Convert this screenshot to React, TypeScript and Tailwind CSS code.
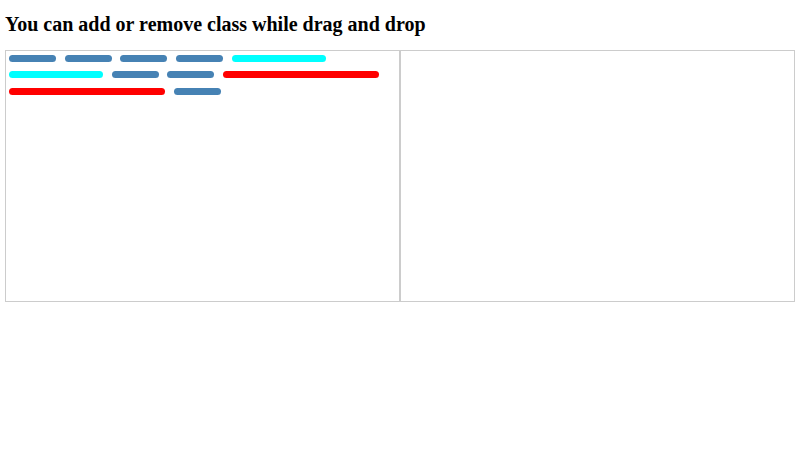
import React from "react";

type Item = { w: string; c: string };

const items: Item[] = [
  { w: "w-[47px]", c: "bg-[#4682b4]" },
  { w: "w-[47px]", c: "bg-[#4682b4]" },
  { w: "w-[47px]", c: "bg-[#4682b4]" },
  { w: "w-[47px]", c: "bg-[#4682b4]" },
  { w: "w-[94px]", c: "bg-[#00ffff]" },
  { w: "w-[94px]", c: "bg-[#00ffff]" },
  { w: "w-[47px]", c: "bg-[#4682b4]" },
  { w: "w-[47px]", c: "bg-[#4682b4]" },
  { w: "w-[156px]", c: "bg-[#ff0000]" },
  { w: "w-[156px]", c: "bg-[#ff0000]" },
  { w: "w-[47px]", c: "bg-[#4682b4]" },
];

export default function App() {
  return (
    <div className="w-[800px] h-[450px] bg-white px-[5px] pt-[13px]" style={{ fontFamily: '"Liberation Serif", "Times New Roman", serif' }}>
      <h2 className="text-[20px] font-bold leading-[23px] text-black m-0">
        You can add or remove class while drag and drop
      </h2>
      <div className="flex mt-[14px]">
        <div className="w-[395px] h-[252px] border border-[#cccccc] px-[3px] pt-[4px]">
          <div className="flex flex-wrap gap-x-[8.7px] gap-y-[9.3px]">
            {items.map((it, i) => (
              <div key={i} className={`${it.w} ${it.c} h-[7px] rounded-full`} />
            ))}
          </div>
        </div>
        <div className="w-[395px] h-[252px] border border-[#cccccc]" />
      </div>
    </div>
  );
}
